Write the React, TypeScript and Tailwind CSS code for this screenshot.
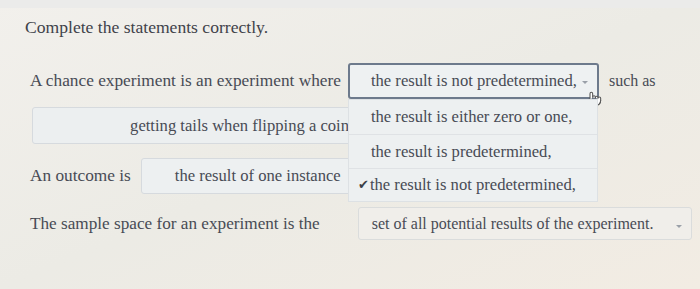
import { Pointer } from 'lucide-react';

function Caret() {
  return <span className="inline-block h-0 w-0 border-x-[3px] border-t-[3px] border-x-transparent border-t-[#9aa0a8]" />;
}

export default function App() {
  return (
    <div className="relative h-[289px] w-[700px] overflow-hidden bg-gradient-to-br from-[#f2f0ec] via-[#ecebe5] to-[#f2ece3] font-['Liberation_Serif','Times_New_Roman',serif] text-[#484b55]">
      <div className="h-[8px] w-full bg-[#ebebea]" />
      <div className="pl-[25px] pt-[8px]">
        <p className="text-[17.6px] leading-[22px] text-[#3f424a]">Complete the statements correctly.</p>

        <div className="mt-[25px] flex items-center">
          <span className="pl-[5px] text-[17.3px] leading-[22px]">A chance experiment is an experiment where</span>
          <div className="relative ml-[7px] flex h-[36px] w-[251px] items-center rounded-[3px] border-2 border-[#6d7a8c] bg-[#eef1f2] pl-[21px] pr-[9px]">
            <span className="text-[16.6px] leading-[20px]">the result is not predetermined,</span>
            <span className="mb-[4px] ml-auto">
              <Caret />
            </span>
            <Pointer className="absolute -bottom-[10px] right-[-5px] h-[16px] w-[16px] fill-white text-[#555]" strokeWidth={1.6} />
            <div className="absolute left-[-2px] top-[34px] z-10 w-[250px] border border-[#dde1e4] bg-[#edf0f1] text-[16.6px] leading-[20px]">
              <div className="flex h-[35px] items-center border-b border-[#dfe2e5] pl-[22px]">the result is either zero or one,</div>
              <div className="flex h-[34px] items-center border-b border-[#dfe2e5] pl-[22px]">the result is predetermined,</div>
              <div className="flex h-[32px] items-center pl-[9px]">
                <span className="mr-[1px] text-[13px] text-[#3b3e46]">✔</span>the result is not predetermined,
              </div>
            </div>
          </div>
          <span className="ml-[10px] text-[16px] leading-[20px]">such as</span>
        </div>

        <div className="ml-[7px] mt-[8px] flex h-[37px] w-[340px] items-center justify-end rounded-[3px] border border-[#d6dade] bg-[#eceff0] pr-[22px]">
          <span className="text-[16.6px] leading-[20px]">getting tails when flipping a coin</span>
        </div>

        <div className="mt-[14px] flex items-center">
          <span className="pl-[5px] text-[17.3px] leading-[22px]">An outcome is</span>
          <div className="ml-[10px] flex h-[36px] w-[215px] items-center rounded-[3px] border border-[#d6dade] bg-[#edf0f1] pl-[33px]">
            <span className="text-[16.6px] leading-[20px]">the result of one instance</span>
          </div>
        </div>

        <div className="mt-[13px] flex items-center">
          <span className="pl-[5px] text-[17.2px] leading-[22px]">The sample space for an experiment is the</span>
          <div className="ml-[38px] flex h-[33px] w-[334px] items-center rounded-[3px] border border-[#dadcdc] bg-[#f0eeea] pl-[13px] pr-[9px]">
            <span className="text-[16px] leading-[20px]">set of all potential results of the experiment.</span>
            <span className="mb-[2px] ml-auto">
              <Caret />
            </span>
          </div>
        </div>
      </div>
    </div>
  );
}
